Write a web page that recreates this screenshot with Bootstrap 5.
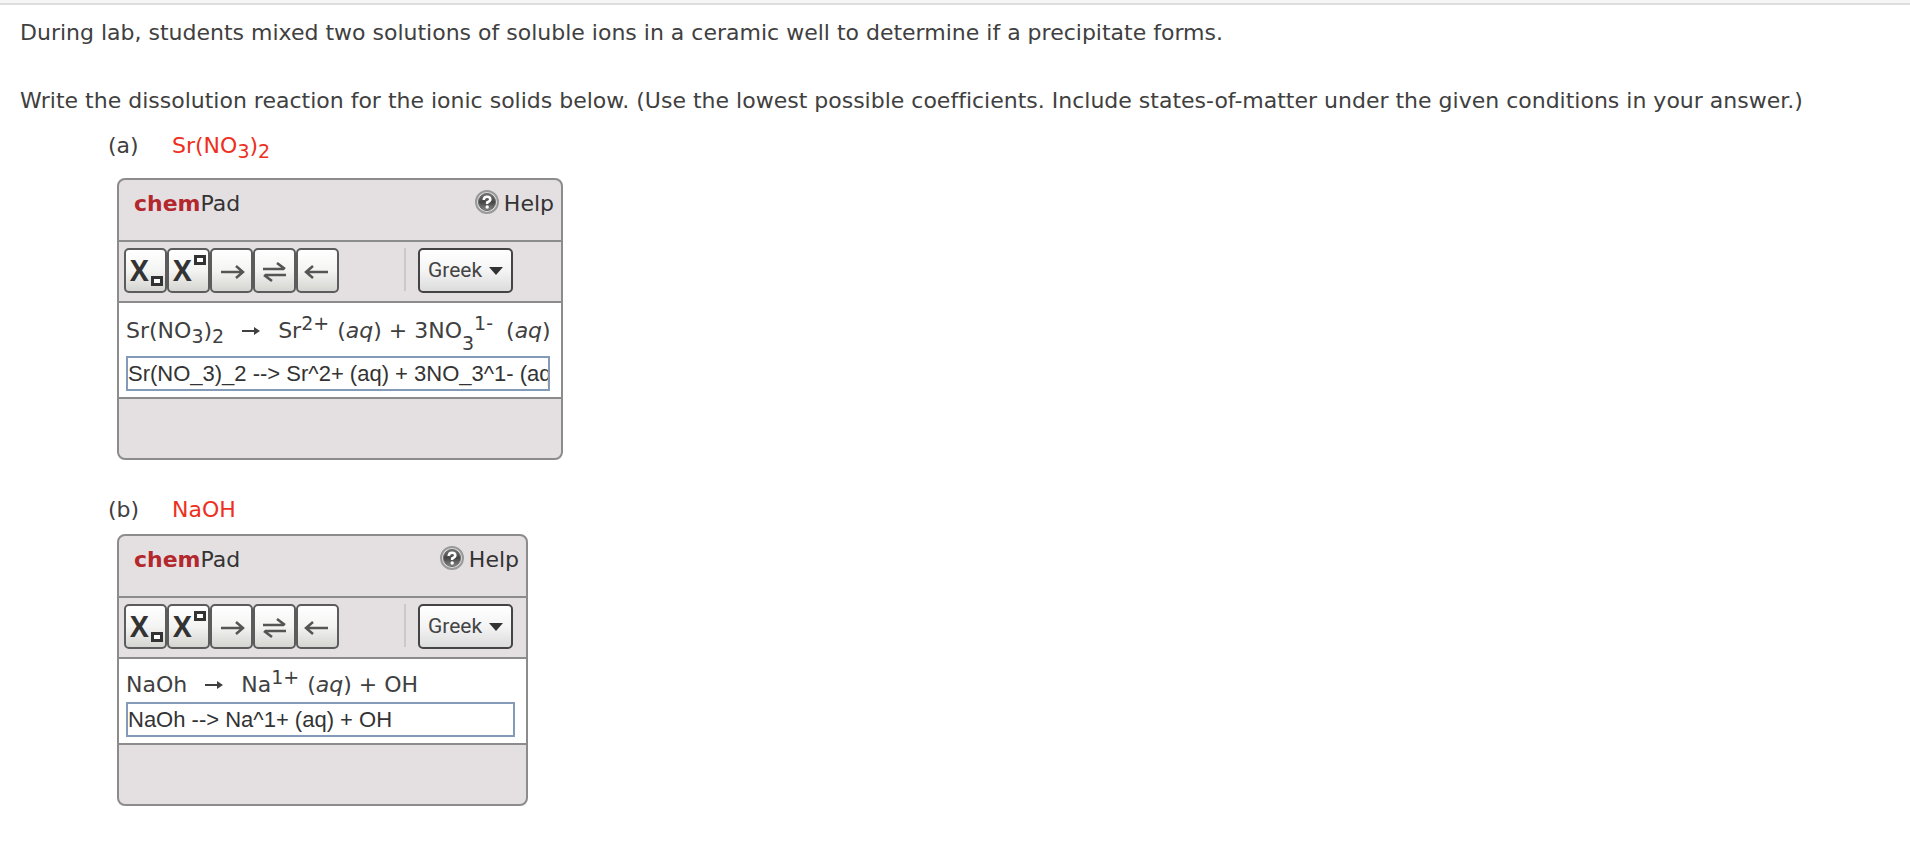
<!DOCTYPE html>
<html lang="en">
<head>
<meta charset="utf-8">
<meta name="viewport" content="width=device-width, initial-scale=1">
<title>Precipitation lab</title>
<link href="https://cdn.jsdelivr.net/npm/bootstrap@5.3.0/dist/css/bootstrap.min.css" rel="stylesheet">
<style>
body{font:22px/28px "DejaVu Sans",Verdana,sans-serif;font-variant-ligatures:none;color:#404040}
.top-strip{height:5px;background:#f5f5f5;border-bottom:2px solid #ddd}
.question{padding:14px 20px}
.question p{margin:0 0 40px}
.question .parts{margin:-23px 0 0 88px}
.part-title{height:46px}
.part-title.tight{height:38px}
.part-label{width:64px}
.formula{color:#ee2f20}
sub,sup{font-size:19px}
.pad{width:fit-content;margin-left:9px;border:2px solid #8c8c8c;border-radius:8px;background:#e4e0e1;overflow:hidden;color:#333}
.pad-a{width:446px;margin-bottom:36px}
.pad-b{width:411px}
.pad-head{height:62px;padding:10px 7px 0 15px;border-bottom:2px solid #8c8c8c}
.brand-red{color:#b3282d}
.help{color:#333;gap:5px}
.tools{height:61px;padding:6px 5px;border-bottom:2px solid #8c8c8c}
.tool{width:43px;height:45px;padding:0;border:2px solid #5c5c5c;border-radius:5px;background:linear-gradient(#fff,#f4f4f3 50%,#d5d6d1)}
.tool svg,.help svg{display:block}
.sep{width:2px;height:43px;margin-left:65px;background:#c8c9ca}
.greek{width:95px;height:45px;margin-left:12px;padding:0 0 1px 8px;border:2px solid #444;border-radius:5px;appearance:none;font:21px/24px Roboto,sans-serif;color:#444;
background:url("data:image/svg+xml,%3Csvg xmlns='http://www.w3.org/2000/svg' width='14' height='8'%3E%3Cpath d='M0 0H14L7 8Z' fill='%23333'/%3E%3C/svg%3E") no-repeat right 8px center,linear-gradient(#fff,#f4f4f4 50%,#dcdcdc)}
.answer{padding:0 11px 6px 7px;background:#fff;border-bottom:2px solid #8c8c8c}
.equation{height:53px;padding-top:14px;white-space:pre;color:#404040}
.pad-b .equation{height:43px;padding-top:12px}
.equation sub,.equation sup{line-height:0}
.equation sup{top:-8px;margin-right:1px}
.arrow{width:18px;height:12px;margin:0 18px}
.equation .ionsub{position:relative;bottom:-12px}
.ionsub + sup{margin-right:6px}
.entry{display:block;width:100%;height:35px;padding:0;border:2px solid #839bb9;border-radius:0;font:22px "Liberation Sans",Arial,sans-serif;color:#333}
.pad-foot{height:59px}
</style>
</head>
<body>
<svg class="position-absolute" width="0" height="0" aria-hidden="true" xmlns="http://www.w3.org/2000/svg">
<defs>
<linearGradient id="ball" x2="0" y2="1"><stop stop-color="#777"/><stop offset=".5" stop-color="#444"/><stop offset="1" stop-color="#888"/></linearGradient>
<symbol id="i-right" viewBox="0 0 39 41"><path d="M9 22H31M24 16L31 22L24 28" fill="none" stroke="#555" stroke-width="2.5"/></symbol>
<symbol id="i-left" viewBox="0 0 39 41"><path d="M30 22H8M15 16L8 22L15 28" fill="none" stroke="#555" stroke-width="2.5"/></symbol>
<symbol id="i-equil" viewBox="0 0 39 41"><path d="M8 19H29M22 13L30 19M31 25H10M17 31L9 25" fill="none" stroke="#555" stroke-width="2.7"/></symbol>
<symbol id="i-sub" viewBox="0 0 39 41"><text x="4" y="31" font-family="Open Sans,sans-serif" font-weight="700" font-size="28" fill="#333">X</text><path d="M26.500 27.500H35.500V34.500H26.500Z" fill="#fff" stroke="#333" stroke-width="3"/></symbol>
<symbol id="i-sup" viewBox="0 0 39 41"><text x="4" y="31" font-family="Open Sans,sans-serif" font-weight="700" font-size="28" fill="#333">X</text><path d="M26.500 6.500H35.500V13.500H26.500Z" fill="#fff" stroke="#333" stroke-width="3"/></symbol>
<symbol id="i-help" viewBox="0 0 24 24"><circle cx="12" cy="12" r="11" fill="#ddd" stroke="#999" stroke-width="2"/><circle cx="12" cy="12" r="8.500" fill="url(#ball)" stroke="#666"/><path d="M8.700 10Q9 6.700 12 6.700Q15.300 6.700 15.300 9.400Q15.300 11 12.200 12.400V14" fill="none" stroke="#fff" stroke-width="2.600"/><circle cx="12.200" cy="17" r="1.700" fill="#fff"/></symbol>
<symbol id="i-arrow" viewBox="0 0 18 12"><path d="M0 5H15" stroke="#404040" stroke-width="2"/><path d="M12 1L18 5L12 9Z" fill="#404040"/></symbol>
</defs>
</svg>
<div class="top-strip"></div>
<main class="question">
<p>During lab, students mixed two solutions of soluble ions in a ceramic well to determine if a precipitate forms.</p>
<p>Write the dissolution reaction for the ionic solids below. (Use the lowest possible coefficients. Include states-of-matter under the given conditions in your answer.)</p>
<div class="parts">
<section>
<div class="part-title d-flex"><span class="part-label">(a)</span><span class="formula">Sr(NO<sub>3</sub>)<sub>2</sub></span></div>
<div class="pad pad-a">
<div class="pad-head d-flex justify-content-between align-items-start"><span><b class="brand-red">chem</b>Pad</span><a href="#" class="help d-flex text-decoration-none"><svg width="24" height="24"><use href="#i-help"/></svg>Help</a></div>
<div class="tools d-flex">
<button class="tool" aria-label="Subscript"><svg width="39" height="41"><use href="#i-sub"/></svg></button><button class="tool" aria-label="Superscript"><svg width="39" height="41"><use href="#i-sup"/></svg></button><button class="tool" aria-label="Right arrow"><svg width="39" height="41"><use href="#i-right"/></svg></button><button class="tool" aria-label="Equilibrium"><svg width="39" height="41"><use href="#i-equil"/></svg></button><button class="tool" aria-label="Left arrow"><svg width="39" height="41"><use href="#i-left"/></svg></button>
<span class="sep"></span><select class="greek" aria-label="Greek letters"><option>Greek</option></select>
</div>
<div class="answer"><div class="equation">Sr(NO<sub>3</sub>)<sub>2</sub><svg class="arrow"><use href="#i-arrow"/></svg>Sr<sup>2+</sup> (<i>aq</i>) + 3NO<sub class="ionsub">3</sub><sup>1-</sup> (<i>aq</i>)</div><input class="entry" type="text" aria-label="Answer to part a" value="Sr(NO_3)_2 --&gt; Sr^2+ (aq) + 3NO_3^1- (aq)"></div>
<div class="pad-foot"></div>
</div>
</section>
<section>
<div class="part-title tight d-flex"><span class="part-label">(b)</span><span class="formula">NaOH</span></div>
<div class="pad pad-b">
<div class="pad-head d-flex justify-content-between align-items-start"><span><b class="brand-red">chem</b>Pad</span><a href="#" class="help d-flex text-decoration-none"><svg width="24" height="24"><use href="#i-help"/></svg>Help</a></div>
<div class="tools d-flex">
<button class="tool" aria-label="Subscript"><svg width="39" height="41"><use href="#i-sub"/></svg></button><button class="tool" aria-label="Superscript"><svg width="39" height="41"><use href="#i-sup"/></svg></button><button class="tool" aria-label="Right arrow"><svg width="39" height="41"><use href="#i-right"/></svg></button><button class="tool" aria-label="Equilibrium"><svg width="39" height="41"><use href="#i-equil"/></svg></button><button class="tool" aria-label="Left arrow"><svg width="39" height="41"><use href="#i-left"/></svg></button>
<span class="sep"></span><select class="greek" aria-label="Greek letters"><option>Greek</option></select>
</div>
<div class="answer"><div class="equation">NaOh<svg class="arrow"><use href="#i-arrow"/></svg>Na<sup>1+</sup> (<i>aq</i>) + OH</div><input class="entry" type="text" aria-label="Answer to part b" value="NaOh --&gt; Na^1+ (aq) + OH"></div>
<div class="pad-foot"></div>
</div>
</section>
</div>
</main>
<script src="https://cdn.jsdelivr.net/npm/bootstrap@5.3.0/dist/js/bootstrap.bundle.min.js"></script>
</body>
</html>
